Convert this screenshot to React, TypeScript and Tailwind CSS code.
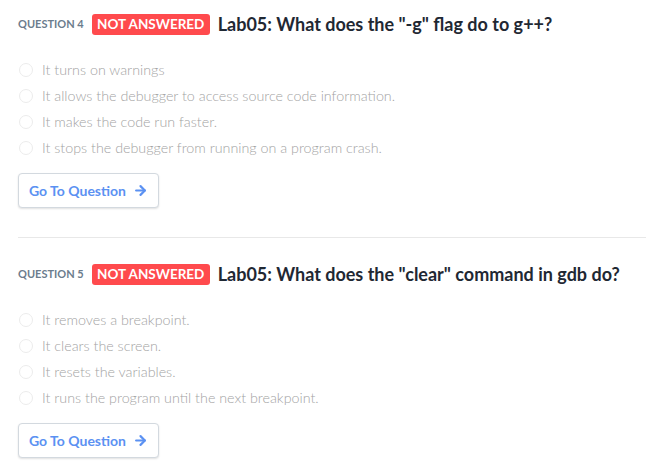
import { ArrowRight } from "lucide-react";

type Question = {
  number: number;
  title: string;
  options: string[];
};

const questions: Question[] = [
  {
    number: 4,
    title: 'Lab05: What does the "-g" flag do to g++?',
    options: [
      "It turns on warnings",
      "It allows the debugger to access source code information.",
      "It makes the code run faster.",
      "It stops the debugger from running on a program crash.",
    ],
  },
  {
    number: 5,
    title: 'Lab05: What does the "clear" command in gdb do?',
    options: [
      "It removes a breakpoint.",
      "It clears the screen.",
      "It resets the variables.",
      "It runs the program until the next breakpoint.",
    ],
  },
];

function QuestionBlock({ q }: { q: Question }) {
  return (
    <div>
      {/* Header */}
      <div className="flex items-center h-6 gap-2">
        <span className="text-[11px] font-bold text-[#6b7c8d]">
          QUESTION {q.number}
        </span>
        <span className="bg-[#ff4a4d] text-white text-[13.5px] font-bold rounded-[3px] w-[118px] justify-center h-[21px] flex items-center">
          NOT ANSWERED
        </span>
        <h3 className="text-[18px] font-bold text-[#1f2833]">{q.title}</h3>
      </div>

      {/* Options */}
      <ul className="mt-[21px]">
        {q.options.map((opt) => (
          <li key={opt} className="flex items-center h-[26px] gap-[9px] pl-px">
            <span className="w-[14px] h-[14px] rounded-full border border-[#ececec] shrink-0" />
            <span className="text-[14.3px] font-light text-[#a3a3a3]">{opt}</span>
          </li>
        ))}
      </ul>

      <button className="mt-3 w-[141px] h-[35px] rounded-[4px] border border-[#d3d9df] bg-white shadow-[0_1px_2px_rgba(0,0,0,0.12)] flex items-center justify-center gap-[7px] text-[#5b91f2] text-[14px] font-bold">
        Go To Question
        <ArrowRight size={15} strokeWidth={3.5} />
      </button>
    </div>
  );
}

export default function App() {
  return (
    <div className="bg-white min-h-screen pl-[18px] pt-3 font-['Lato',sans-serif]">
      <QuestionBlock q={questions[0]} />
      <div className="border-t border-[#e8e8e8] mt-[29px] mb-6" />
      <QuestionBlock q={questions[1]} />
    </div>
  );
}
